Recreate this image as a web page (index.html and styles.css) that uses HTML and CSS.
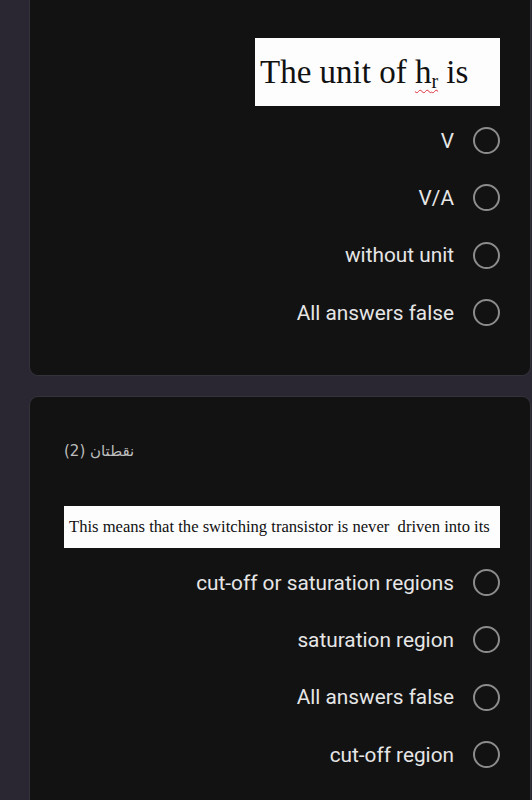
FILE: index.html
```html
<!DOCTYPE html>
<html lang="ar" dir="rtl">
<head>
<meta charset="utf-8">
<link rel="stylesheet" href="styles.css">
</head>
<body>
<div class="page">
  <section class="card card-first">
    <div class="qimage qimage-1" dir="ltr">
      <span>The unit of <span class="sq">h<sub>r</sub></span> is</span>
    </div>
    <div class="options">
      <label class="opt"><span class="radio"></span><span class="txt">V</span></label>
      <label class="opt"><span class="radio"></span><span class="txt">V/A</span></label>
      <label class="opt"><span class="radio"></span><span class="txt">without unit</span></label>
      <label class="opt"><span class="radio"></span><span class="txt">All answers false</span></label>
    </div>
  </section>
  <section class="card card-second">
    <div class="qhead">
      <span class="points">نقطتان (2)</span>
    </div>
    <div class="qimage qimage-2" dir="ltr">
      <span>This means that the switching transistor is never&nbsp; driven into its</span>
    </div>
    <div class="options">
      <label class="opt"><span class="radio"></span><span class="txt">cut-off or saturation regions</span></label>
      <label class="opt"><span class="radio"></span><span class="txt">saturation region</span></label>
      <label class="opt"><span class="radio"></span><span class="txt">All answers false</span></label>
      <label class="opt"><span class="radio"></span><span class="txt">cut-off region</span></label>
    </div>
  </section>
</div>
</body>
</html>
```
FILE: styles.css
```css
html, body {
  margin: 0;
  padding: 0;
  background: #2a2732;
  height: 800px;
  overflow: hidden;
}
.page {
  display: flex;
  flex-direction: column;
  gap: 20px;
  padding-left: 29px;
  padding-right: 1px;
  font-family: Roboto, "DejaVu Sans", sans-serif;
}
.card {
  background: #121212;
  border: 1px solid #34323b;
  border-radius: 9px;
  padding-right: 30px;
  padding-left: 34px;
}
.card-first {
  border-top: none;
  border-top-left-radius: 0;
  border-top-right-radius: 0;
  height: 376px;
  box-sizing: border-box;
  padding-top: 38px;
  display: flex;
  flex-direction: column;
  align-items: flex-start;
}
.card-second {
  height: 420px;
  box-sizing: border-box;
  padding-top: 44px;
}
.qimage {
  background: #fdfdfd;
  color: #111;
  font-family: "Liberation Serif", "Times New Roman", serif;
  display: flex;
  align-items: center;
  box-sizing: border-box;
}
.qimage-1 {
  width: 245px;
  height: 68px;
  font-size: 33px;
  padding-left: 5px;
  margin-left: auto;
  margin-right: 0;
  align-self: flex-start;
}
.qimage-1 span { line-height: 1; }
.sq {
  text-decoration: underline wavy #e0303a;
  text-decoration-thickness: 1px;
  text-underline-offset: 6px;
}
.qimage-1 sub {
  font-size: 20px;
  vertical-align: -5px;
  line-height: 0;
}
.qimage-2 {
  height: 42px;
  font-size: 16.6px;
  padding-left: 5px;
}
.qhead {
  display: flex;
  justify-content: flex-end;
  height: 20px;
  margin-bottom: 45px;
}
.points {
  color: #bdbdbd;
  font-size: 15px;
  line-height: 20px;
  font-family: "DejaVu Sans", Roboto, sans-serif;
}
.options {
  display: flex;
  flex-direction: column;
  margin-top: 6px;
  align-self: stretch;
}
.opt {
  display: flex;
  align-items: center;
  gap: 19px;
  height: 57.3px;
}
.radio {
  width: 27px;
  height: 27px;
  box-sizing: border-box;
  border: 2.5px solid #8c8c8c;
  border-radius: 50%;
  flex: none;
}
.txt {
  color: #e6e6e6;
  font-size: 20.8px;
  line-height: 24px;
}
```
